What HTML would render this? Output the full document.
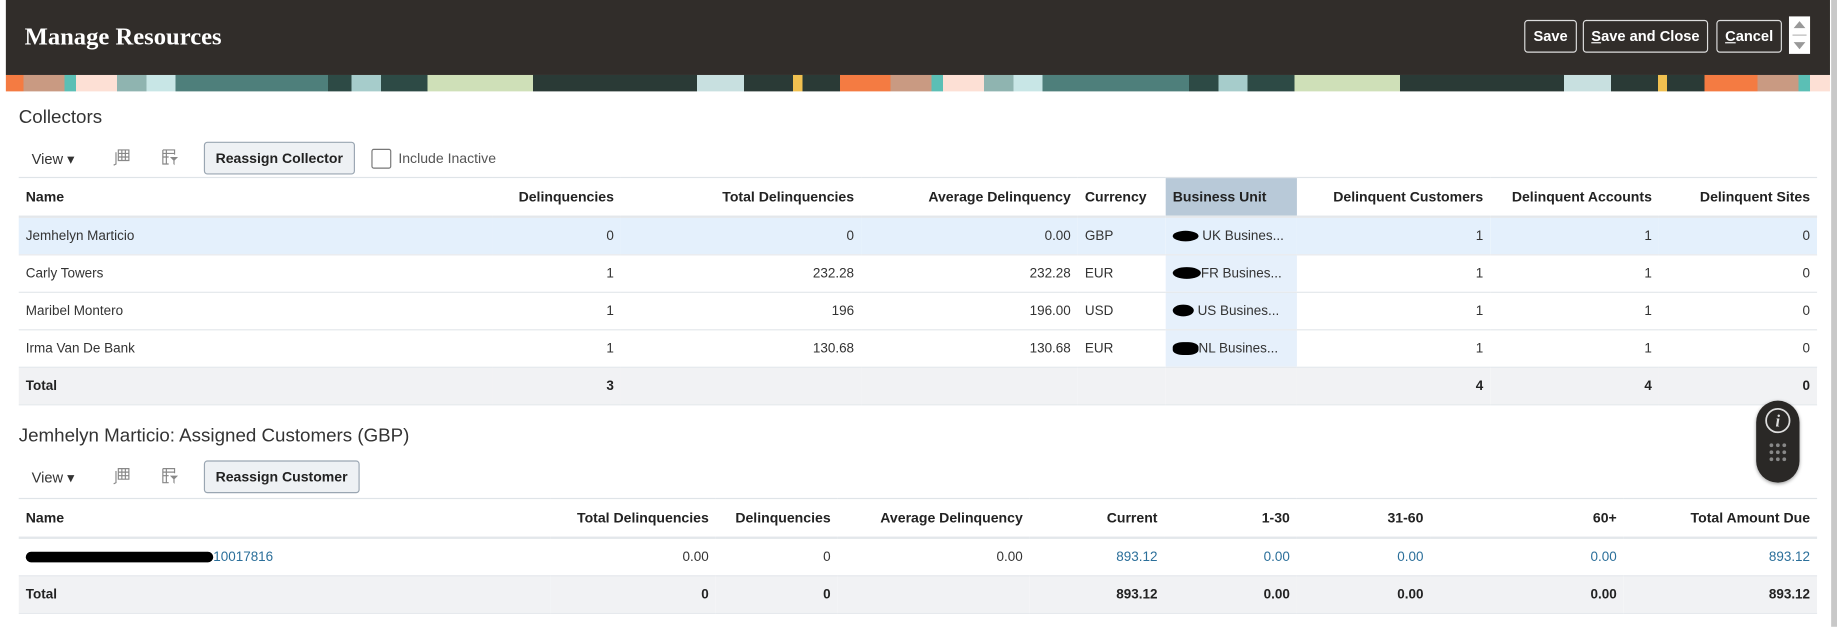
<!DOCTYPE html>
<html><head><meta charset="utf-8">
<style>
html,body{margin:0;padding:0;width:1837px;height:627px;overflow:hidden;background:#fff;}
#w{position:absolute;left:0;top:0;width:1568px;height:535px;transform:scale(1.17156);transform-origin:0 0;font-family:"Liberation Sans",Arial,sans-serif;color:#333;}
.hdr{position:absolute;left:5px;top:0;width:1557px;height:64px;background:#312d2a;}
.title{position:absolute;left:16px;top:19px;font-family:"Liberation Serif",serif;font-weight:bold;font-size:21px;color:#fff;white-space:nowrap;}
.hb{position:absolute;top:17px;height:28px;box-sizing:border-box;border:1px solid #ddd;border-radius:3px;color:#fff;font-weight:bold;font-size:12.5px;line-height:26px;text-align:center;white-space:nowrap;}
.spin{position:absolute;left:1527px;top:14px;width:18px;height:32px;background:#fff;}
.banner{position:absolute;left:5px;top:64px;width:1557px;height:14px;
background:linear-gradient(90deg,#f47b42 0 15px,#c99a82 15px 50px,#5bbfb5 50px 60px,#fde0d5 60px 95px,#8fb4b0 95px 120px,#c8e6e6 120px 145px,#4e7f7b 145px 275px,#2d4a45 275px 295px,#a6cccb 295px 320px,#2d4a45 320px 360px,#cfe0b8 360px 450px,#2a3a36 450px 590px,#c8e0e0 590px 630px,#2a3a36 630px 672px,#f0c050 672px 680px,#2a3a36 680px 712px,#f47b42 712px 755px,#c99a82 755px 790px,#5bbfb5 790px 800px,#fde0d5 800px 835px,#8fb4b0 835px 860px,#c8e6e6 860px 885px,#4e7f7b 885px 1010px,#2d4a45 1010px 1035px,#a6cccb 1035px 1060px,#2d4a45 1060px 1100px,#cfe0b8 1100px 1190px,#2a3a36 1190px 1330px,#c8e0e0 1330px 1370px,#2a3a36 1370px 1410px,#f0c050 1410px 1418px,#2a3a36 1418px 1450px,#f47b42 1450px 1495px,#c99a82 1495px 1530px,#5bbfb5 1530px 1540px,#fde0d5 1540px);}
.sb{position:absolute;left:1563px;top:0;width:5px;height:535px;background:#c8c8c8;}
.h2{position:absolute;left:16px;font-size:16px;color:#333;white-space:nowrap;}
.tb{position:absolute;left:16px;width:600px;height:30px;font-size:12.5px;white-space:nowrap;}
.view{position:absolute;left:11px;top:7px;}
.ic{position:absolute;top:5px;width:16px;height:16px;}
.btn{position:absolute;left:158px;top:0;height:28px;box-sizing:border-box;border:1px solid #9aa6b2;border-radius:3px;background:#eef1f4;font-weight:bold;font-size:12px;line-height:26px;padding:0 9px;color:#222;white-space:nowrap;}
table{position:absolute;left:16px;border-collapse:collapse;table-layout:fixed;font-size:11.5px;}
td,th{padding:0 6px;white-space:nowrap;overflow:hidden;border-bottom:1px solid #e3e7eb;}
th{font-weight:bold;color:#222;height:32px;text-align:right;font-size:12px;border-top:1px solid #dfe4e8;border-bottom:2px solid #e3e7eb;}
td{height:31px;text-align:right;}
.l{text-align:left;}
.sel td{background:#e4f0fc;}
.tot td{background:#f1f2f4;font-weight:bold;color:#222;}
.bu{background:#e6f0fb;}
th.bu{background:#b8c9d8;}
.lk{color:#2b6f9a;}
.blob{display:inline-block;background:#000;border-radius:50%;vertical-align:middle;}
</style></head><body><div id="w">
<div class="hdr"><div class="title">Manage Resources</div>
<div class="hb" style="left:1296px;width:45px;">Save</div>
<div class="hb" style="left:1346px;width:107px;"><u>S</u>ave and Close</div>
<div class="hb" style="left:1460px;width:56px;"><u>C</u>ancel</div>
</div>
<div class="spin"><svg width="18" height="32"><path d="M4 10 L9 4 L14 10Z M4 22 L9 28 L14 22Z" fill="#999"/><line x1="3" y1="16" x2="15" y2="16" stroke="#bbb"/></svg></div>
<div class="banner"></div>
<div class="sb"></div>

<div class="h2" style="top:92px;">Collectors</div>
<div class="tb" style="top:121px;">
<span class="view">View ▾</span>
<svg class="ic" style="left:79px" viewBox="0 0 16 16"><path d="M6 2h9v9H6z M6 5h9 M6 8h9 M9 2v9 M12 2v9 M4 4v10l-2 1" fill="none" stroke="#888" stroke-width="1"/></svg>
<svg class="ic" style="left:121px" viewBox="0 0 16 16"><path d="M2 2h10v4 M2 2v12h5 M2 5h10 M2 8h5 M5 2v12" fill="none" stroke="#888"/><path d="M8 8h7l-3 3v4l-1-1v-3z" fill="#888"/></svg>
<div class="btn">Reassign Collector</div>
<div style="position:absolute;left:301px;top:6px;width:15px;height:15px;border:1px solid #777;border-radius:2px;background:#fff;"></div>
<span style="position:absolute;left:324px;top:7px;color:#555;font-size:12px;">Include Inactive</span>
</div>
<table style="top:151px;width:1535px;">
<colgroup><col style="width:404px"><col style="width:110px"><col style="width:205px"><col style="width:185px"><col style="width:75px"><col style="width:112px"><col style="width:165px"><col style="width:144px"><col style="width:135px"></colgroup>
<tr><th class="l">Name</th><th>Delinquencies</th><th>Total Delinquencies</th><th>Average Delinquency</th><th class="l">Currency</th><th class="l bu">Business Unit</th><th>Delinquent Customers</th><th>Delinquent Accounts</th><th>Delinquent Sites</th></tr>
<tr class="sel"><td class="l">Jemhelyn Marticio</td><td>0</td><td>0</td><td>0.00</td><td class="l">GBP</td><td class="l"><span class="blob" style="width:22px;height:9px"></span> UK Busines...</td><td>1</td><td>1</td><td>0</td></tr>
<tr><td class="l">Carly Towers</td><td>1</td><td>232.28</td><td>232.28</td><td class="l">EUR</td><td class="l bu"><span class="blob" style="width:24px;height:10px"></span>FR Busines...</td><td>1</td><td>1</td><td>0</td></tr>
<tr><td class="l">Maribel Montero</td><td>1</td><td>196</td><td>196.00</td><td class="l">USD</td><td class="l bu"><span class="blob" style="width:18px;height:10px"></span> US Busines...</td><td>1</td><td>1</td><td>0</td></tr>
<tr><td class="l">Irma Van De Bank</td><td>1</td><td>130.68</td><td>130.68</td><td class="l">EUR</td><td class="l bu"><span class="blob" style="width:22px;height:11px;border-radius:40%"></span>NL Busines...</td><td>1</td><td>1</td><td>0</td></tr>
<tr class="tot"><td class="l">Total</td><td>3</td><td></td><td></td><td></td><td></td><td>4</td><td>4</td><td>0</td></tr>
</table>

<div class="h2" style="top:364px;">Jemhelyn Marticio: Assigned Customers (GBP)</div>
<div class="tb" style="top:393px;">
<span class="view">View ▾</span>
<svg class="ic" style="left:79px" viewBox="0 0 16 16"><path d="M6 2h9v9H6z M6 5h9 M6 8h9 M9 2v9 M12 2v9 M4 4v10l-2 1" fill="none" stroke="#888" stroke-width="1"/></svg>
<svg class="ic" style="left:121px" viewBox="0 0 16 16"><path d="M2 2h10v4 M2 2v12h5 M2 5h10 M2 8h5 M5 2v12" fill="none" stroke="#888"/><path d="M8 8h7l-3 3v4l-1-1v-3z" fill="#888"/></svg>
<div class="btn">Reassign Customer</div>
</div>
<table style="top:425px;width:1535px;">
<colgroup><col style="width:454px"><col style="width:141px"><col style="width:104px"><col style="width:164px"><col style="width:115px"><col style="width:113px"><col style="width:114px"><col style="width:165px"><col style="width:165px"></colgroup>
<tr><th class="l">Name</th><th>Total Delinquencies</th><th>Delinquencies</th><th>Average Delinquency</th><th>Current</th><th>1-30</th><th>31-60</th><th>60+</th><th>Total Amount Due</th></tr>
<tr><td class="l lk"><span class="blob" style="width:160px;height:9px;border-radius:5px"></span>10017816</td><td>0.00</td><td>0</td><td>0.00</td><td class="lk">893.12</td><td class="lk">0.00</td><td class="lk">0.00</td><td class="lk">0.00</td><td class="lk">893.12</td></tr>
<tr class="tot"><td class="l">Total</td><td>0</td><td>0</td><td></td><td>893.12</td><td>0.00</td><td>0.00</td><td>0.00</td><td>893.12</td></tr>
</table>

<div style="position:absolute;left:1499px;top:342px;width:37px;height:70px;border-radius:19px;background:#2a2826;box-shadow:0 1px 3px rgba(0,0,0,.4);">
<svg width="37" height="70"><circle cx="18.5" cy="17" r="10" fill="none" stroke="#ddd" stroke-width="1.5"/><text x="18.5" y="22" text-anchor="middle" fill="#ddd" font-family="Liberation Serif" font-style="italic" font-weight="bold" font-size="14">i</text>
<g fill="#888"><circle cx="13" cy="38" r="1.6"/><circle cx="18.5" cy="38" r="1.6"/><circle cx="24" cy="38" r="1.6"/><circle cx="13" cy="44" r="1.6"/><circle cx="18.5" cy="44" r="1.6"/><circle cx="24" cy="44" r="1.6"/><circle cx="13" cy="50" r="1.6"/><circle cx="18.5" cy="50" r="1.6"/><circle cx="24" cy="50" r="1.6"/></g></svg>
</div>
</div></body></html>
